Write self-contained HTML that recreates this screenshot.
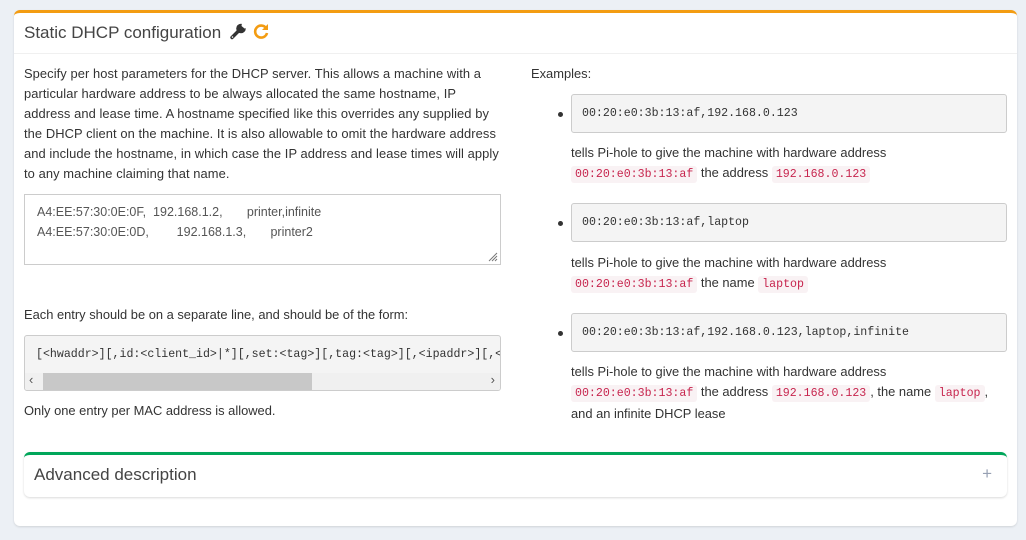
<!DOCTYPE html>
<html><head><meta charset="utf-8"><style>
*{box-sizing:border-box;margin:0;padding:0}
body{width:1026px;height:540px;background:#ecf0f5;font-family:"Liberation Sans",sans-serif;font-size:12.9px;color:#333;position:relative;overflow:hidden}
.card{position:absolute;left:14px;top:10px;width:1003px;height:516px;background:#fff;border-top:3px solid #f39c12;border-radius:6px;box-shadow:0 1px 2px rgba(0,0,0,.12)}
.hd{position:absolute;left:0;top:0;width:100%;height:41px;border-bottom:1px solid #f0f0f0}
.hd h3{position:absolute;left:10px;top:9px;font-size:17px;font-weight:normal;color:#444}
.abs{position:absolute}
.p{line-height:20px}
.ta{border:1px solid #ccc;font-size:12.5px;color:#555;line-height:20px;padding:7px 12px}
.mono{font-family:"Liberation Mono",monospace}
.pre{background:#f4f4f4;border:1px solid #ccc;border-radius:3px;font-family:"Liberation Mono",monospace;font-size:11.6px;color:#333;padding:0 10px;line-height:38px}
code{font-family:"Liberation Mono",monospace;font-size:11.6px;color:#c7254e;background:#f9f2f4;padding:2px 4px;border-radius:3px}
.dot{width:5px;height:5px;border-radius:50%;background:#333}
</style></head><body>
<div class="card">
 <div class="hd"><h3>Static DHCP configuration
 <svg width="18" height="17" viewBox="0 0 18 17" style="vertical-align:-2px;margin-left:3px"><path d="M3 14.5 L10 7.5" stroke="#333" stroke-width="3.4" stroke-linecap="round"/><circle cx="12" cy="5.5" r="4.8" fill="#333"/><path d="M13 0 L18 0 L18 5 L15.5 5.5 L12.5 3 Z" fill="#fff"/><circle cx="3.5" cy="14" r="0.8" fill="#fff"/></svg>
 <svg width="18" height="18" viewBox="0 0 18 18" style="vertical-align:-2px"><path d="M14 6 A6 6 0 1 0 15 11" stroke="#f39c12" stroke-width="2.6" fill="none"/><path d="M16 2 L16 8 L10 8 Z" fill="#f39c12"/></svg></h3></div>
</div>
<div class="abs p" style="left:24px;top:64px;white-space:nowrap;letter-spacing:0.08px">Specify per host parameters for the DHCP server. This allows a machine with a<br>particular hardware address to be always allocated the same hostname, IP<br>address and lease time. A hostname specified like this overrides any supplied by<br>the DHCP client on the machine. It is also allowable to omit the hardware address<br>and include the hostname, in which case the IP address and lease times will apply<br>to any machine claiming that name.</div>
<div class="abs ta" style="left:24px;top:194px;width:477px;height:71px">A4:EE:57:30:0E:0F,&nbsp; 192.168.1.2,&nbsp;&nbsp;&nbsp;&nbsp;&nbsp;&nbsp; printer,infinite<br>A4:EE:57:30:0E:0D,&nbsp;&nbsp;&nbsp;&nbsp;&nbsp;&nbsp;&nbsp; 192.168.1.3,&nbsp;&nbsp;&nbsp;&nbsp;&nbsp;&nbsp; printer2
<svg class="abs" style="right:2px;bottom:2px" width="12" height="12"><path d="M11 3L3 11M11 6L6 11M11 9L9 11" stroke="#777" stroke-width="1"/></svg></div>
<div class="abs p" style="left:24px;top:305px">Each entry should be on a separate line, and should be of the form:</div>
<div class="abs" style="left:24px;top:335px;width:477px;height:56px;background:#f4f4f4;border:1px solid #ccc;border-radius:3px;overflow:hidden">
 <div class="abs mono" style="left:11px;top:12px;font-size:11.6px;white-space:nowrap;color:#333">[&lt;hwaddr&gt;][,id:&lt;client_id&gt;|*][,set:&lt;tag&gt;][,tag:&lt;tag&gt;][,&lt;ipaddr&gt;][,&lt;</div>
 <div class="abs" style="left:0;top:37px;width:100%;height:18px;background:#f0f0f0"></div>
 <div class="abs" style="left:18px;top:37px;width:269px;height:18px;background:#c8c8c8"></div>
 <div class="abs" style="left:4px;top:36px;font-size:13px;color:#555">‹</div>
 <div class="abs" style="right:5px;top:36px;font-size:13px;color:#555">›</div>
</div>
<div class="abs p" style="left:24px;top:401px">Only one entry per MAC address is allowed.</div>

<div class="abs p" style="left:531px;top:64px">Examples:</div>
<div class="abs dot" style="left:558px;top:112px"></div>
<div class="abs pre" style="left:571px;top:94px;width:436px;height:39px">00:20:e0:3b:13:af,192.168.0.123</div>
<div class="abs p" style="left:571px;top:143px;width:440px">tells Pi-hole to give the machine with hardware address<br><code>00:20:e0:3b:13:af</code> the address <code>192.168.0.123</code></div>
<div class="abs dot" style="left:558px;top:221px"></div>
<div class="abs pre" style="left:571px;top:203px;width:436px;height:39px">00:20:e0:3b:13:af,laptop</div>
<div class="abs p" style="left:571px;top:253px;width:440px">tells Pi-hole to give the machine with hardware address<br><code>00:20:e0:3b:13:af</code> the name <code>laptop</code></div>
<div class="abs dot" style="left:558px;top:331px"></div>
<div class="abs pre" style="left:571px;top:313px;width:436px;height:39px">00:20:e0:3b:13:af,192.168.0.123,laptop,infinite</div>
<div class="abs p" style="left:571px;top:362px;width:440px">tells Pi-hole to give the machine with hardware address<br><code>00:20:e0:3b:13:af</code> the address <code>192.168.0.123</code>, the name <code>laptop</code>,<br>and an infinite DHCP lease</div>

<div class="abs" style="left:24px;top:452px;width:983px;height:45px;border-top:3px solid #00a65a;border-radius:6px;box-shadow:0 1px 2px rgba(0,0,0,.15);background:#fff">
 <div class="abs" style="left:10px;top:10px;font-size:17px;color:#444">Advanced description</div>
 <div class="abs" style="right:15px;top:9px;font-size:17px;color:#97a0b3">+</div>
</div>
</body></html>
